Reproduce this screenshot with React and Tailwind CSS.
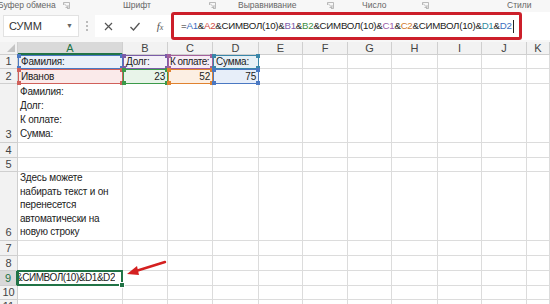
import { useEffect } from 'react'

const gridCols = 'grid grid-cols-[18px_105px_45px_45px_46px_44px_45px_44px_46px_44px_45px_1fr]'

function Corners({ color })
{
    return (
        <>
            <span className={`absolute -left-[2px] -top-[2px] w-[4px] h-[4px] ${color}`} />
            <span className={`absolute -right-[2px] -top-[2px] w-[4px] h-[4px] ${color}`} />
            <span className={`absolute -left-[2px] -bottom-[2px] w-[4px] h-[4px] ${color}`} />
            <span className={`absolute -right-[2px] -bottom-[2px] w-[4px] h-[4px] ${color}`} />
        </>
    );
}

function Launcher()
{
    return (
        <svg width="7" height="7" viewBox="0 0 7 7" className="shrink-0">
            <path d="M0.5 3 V0.5 H6.5 V6.5 H4" stroke="#aaa" strokeWidth="0.8" fill="none" />
            <path d="M1 1.5 L5 5.5 M5 3 V5.5 H2.5" stroke="#aaa" strokeWidth="0.8" fill="none" />
        </svg>
    );
}

function RowHead({ n, active, tall })
{
    return (
        <div className={`flex justify-center border-r border-b border-[#cfcfcf] text-[11px] leading-[13px] tracking-normal ${tall ? 'items-end pb-[1px]' : 'items-center'} ${active ? 'bg-[#d9d9d9] text-[#217346] border-r-2 border-r-[#217346]' : 'bg-[#f2f2f2] text-[#444]'}`}>
            {n}
        </div>
    );
}

function Empty({ count })
{
    return Array.from({ length: count }).map((_, i) => (
        <div key={i} className="border-r border-b border-[#dcdcdc]" />
    ));
}

export default function App()
{
    useEffect(() => {
        document.title = "СИМВОЛ(10) - Excel";
    }, []);

    const letters = ['B', 'C', 'D', 'E', 'F', 'G', 'H', 'I', 'J', 'K'];

    return (
        <div className="relative w-[550px] h-[304px] overflow-hidden bg-white font-['Liberation_Sans','Noto_Sans',sans-serif] text-[#222]">
            {/* ribbon group labels */}
            <div className="flex h-[10px] items-center bg-[#f7f7f7] text-[8.5px] leading-[10px] text-[#666] overflow-hidden whitespace-nowrap">
                <span className="-ml-[2px] w-[65px] shrink-0">Буфер обмена</span>
                <span className="w-[60px] shrink-0"><Launcher /></span>
                <span className="w-[86px] shrink-0">Шрифт</span>
                <span className="w-[29px] shrink-0"><Launcher /></span>
                <span className="w-[89px] shrink-0">Выравнивание</span>
                <span className="w-[35px] shrink-0"><Launcher /></span>
                <span className="w-[60px] shrink-0">Число</span>
                <span className="w-[85px] shrink-0"><Launcher /></span>
                <span className="shrink-0">Стили</span>
            </div>

            {/* formula bar */}
            <div className="flex h-[32px] items-center bg-[#f7f7f7]">
                <div className="ml-[3px] flex h-[22px] w-[76px] items-center justify-between bg-white border border-[#e2e2e2] px-[5px] text-[11px] text-[#333]">
                    <span>СУММ</span>
                    <span className="text-[7px] text-[#666]">▼</span>
                </div>
                <div className="mx-[7px] flex flex-col gap-[2px]">
                    <span className="w-[2px] h-[2px] bg-[#bbb]" />
                    <span className="w-[2px] h-[2px] bg-[#bbb]" />
                    <span className="w-[2px] h-[2px] bg-[#bbb]" />
                </div>
                <div className="flex h-[22px] w-[76px] items-center justify-around bg-white text-[#555]">
                    <svg width="11" height="11" viewBox="0 0 11 11"><path d="M2 2 L9 9 M9 2 L2 9" stroke="#555" strokeWidth="1.2" /></svg>
                    <svg width="12" height="11" viewBox="0 0 12 11"><path d="M1.5 6 L4.5 9 L10.5 2" stroke="#555" strokeWidth="1.3" fill="none" /></svg>
                    <span className="font-['Liberation_Serif',serif] italic text-[11px] text-[#555]">f<span className="text-[8px]">x</span></span>
                </div>
                <div className="flex h-[28px] w-[351px] items-center rounded-[3px] border-[3px] border-[#cc1f2a] bg-white pl-[7px] text-[9.7px] tracking-[-0.25px] whitespace-nowrap text-[#222]">
                    =<span className="text-[#3d6fc0]">A1</span>&amp;<span className="text-[#cf4b45]">A2</span>&amp;СИМВОЛ(10)&amp;<span className="text-[#7b5ca8]">B1</span>&amp;<span className="text-[#3b8e42]">B2</span>&amp;СИМВОЛ(10)&amp;<span className="text-[#9a5ca8]">C1</span>&amp;<span className="text-[#d07a2c]">C2</span>&amp;СИМВОЛ(10)&amp;<span className="text-[#2f8aa0]">D1</span>&amp;<span className="text-[#3d6fc0]">D2</span><span className="ml-[1px] w-[1px] h-[13px] bg-[#222]" />
                </div>
                <div className="flex-1 h-[28px] bg-white" />
            </div>

            {/* sheet */}
            <div className={`${gridCols} grid-rows-[13px_14px_15px_59px_15px_14px_69px_15px_15px_15px_14px_1fr] h-[262px] text-[10px] tracking-[-0.2px] leading-[14px]`}>
                {/* column headers */}
                <div className="relative border-r border-b border-[#cfcfcf] bg-[#f2f2f2]">
                    <svg className="absolute right-[2px] bottom-[2px]" width="8" height="8" viewBox="0 0 8 8"><path d="M8 0 L8 8 L0 8 Z" fill="#c4c4c4" /></svg>
                </div>
                <div className="flex items-center justify-center border-r border-b-2 border-[#cfcfcf] border-b-[#217346] bg-[#d9d9d9] text-[11px] tracking-normal text-[#217346]">A</div>
                {letters.map(l => (
                    <div key={l} className="flex items-center justify-center border-r border-b border-[#cfcfcf] bg-[#f2f2f2] text-[11px] tracking-normal text-[#444]">{l}</div>
                ))}

                {/* row 1 */}
                <RowHead n="1" />
                <div className="relative flex items-center px-[2px] bg-[#eaf0f9] border border-[#4a78c2]">Фамилия:<Corners color="bg-[#4a78c2]" /></div>
                <div className="relative flex items-center px-[2px] bg-[#f4f1f8] border border-[#7b5ca8]">Долг:<Corners color="bg-[#7b5ca8]" /></div>
                <div className="relative flex items-center px-[1px] bg-[#f8edf5] border border-[#a3609c] whitespace-nowrap tracking-[-0.5px]">К оплате:<Corners color="bg-[#a3609c]" /></div>
                <div className="relative flex items-center px-[2px] bg-[#e6f0f6] border border-[#3a86a8]">Сумма:<Corners color="bg-[#3a86a8]" /></div>
                <Empty count={7} />

                {/* row 2 */}
                <RowHead n="2" />
                <div className="relative flex items-center px-[2px] bg-[#faeaea] border border-[#d0605a]">Иванов<Corners color="bg-[#d0605a]" /></div>
                <div className="relative flex items-center justify-end px-[2px] bg-[#e8f4e9] border border-[#3b9a4a]">23<Corners color="bg-[#3b9a4a]" /></div>
                <div className="relative flex items-center justify-end px-[2px] bg-[#fcefe3] border border-[#e0822f]">52<Corners color="bg-[#e0822f]" /></div>
                <div className="relative flex items-center justify-end px-[2px] bg-[#e7eef9] border border-[#4a78c2]">75<Corners color="bg-[#4a78c2]" /></div>
                <Empty count={7} />

                {/* row 3 */}
                <RowHead n="3" tall />
                <div className="flex flex-col justify-end px-[2px] pb-[1px] border-r border-b border-[#dcdcdc]">
                    <span>Фамилия:</span>
                    <span>Долг:</span>
                    <span>К оплате:</span>
                    <span>Сумма:</span>
                </div>
                <Empty count={10} />

                {/* rows 4-5 */}
                <RowHead n="4" />
                <Empty count={11} />
                <RowHead n="5" />
                <Empty count={11} />

                {/* row 6 */}
                <RowHead n="6" tall />
                <div className="flex flex-col justify-end px-[2px] pb-[1px] leading-[13.6px] border-r border-b border-[#dcdcdc]">
                    <span>Здесь можете</span>
                    <span>набирать текст и он</span>
                    <span>перенесется</span>
                    <span>автоматически на</span>
                    <span>новую строку</span>
                </div>
                <Empty count={10} />

                {/* rows 7-8 */}
                <RowHead n="7" />
                <Empty count={11} />
                <RowHead n="8" />
                <Empty count={11} />

                {/* row 9: selected cell */}
                <RowHead n="9" active />
                <div className="relative -mt-[1px] -ml-[1px] flex items-center border-2 border-[#217346] pr-[6px] whitespace-nowrap tracking-[-0.45px]">
                    <div className="flex w-full justify-end overflow-hidden">
                        <span>&amp;СИМВОЛ(10)&amp;D1&amp;D2</span>
                    </div>
                    <span className="absolute -right-[4px] -bottom-[4px] w-[6px] h-[6px] bg-[#217346] border border-white" />
                </div>
                <Empty count={10} />

                {/* rows 10-11 */}
                <RowHead n="10" />
                <Empty count={11} />
                <RowHead n="11" />
                <Empty count={11} />
            </div>

            {/* annotation arrow */}
            <svg className="absolute left-[124px] top-[258px]" width="44" height="22" viewBox="0 0 44 22">
                <path d="M41 4 L12 13" stroke="#d42020" strokeWidth="2.4" strokeLinecap="round" />
                <path d="M3 16 L13 8 L15 17 Z" fill="#d42020" />
            </svg>
        </div>
    );
}
